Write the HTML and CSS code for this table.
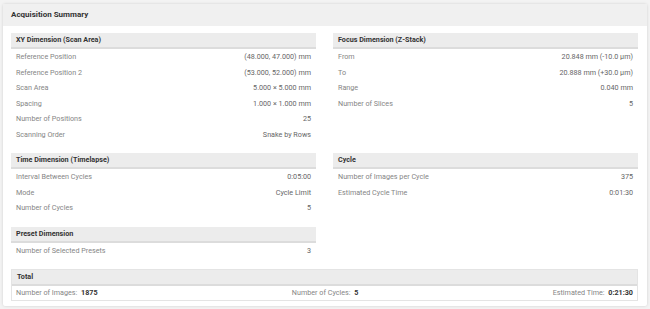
FILE: index.html
```html
<!DOCTYPE html>
<html lang="en">
<head>
    <meta charset="UTF-8">
    <title>Acquisition Summary</title>
    <link rel="stylesheet" href="styles.css">
</head>
<body>

<div class="card">
    <div class="card-header">Acquisition Summary</div>

    <div class="card-body">
        <div class="grid">
            <div class="section">
                <div class="section-title">XY Dimension (Scan Area)</div>
                <div class="row"><span>Reference Position</span><span class="value">(48.000, 47.000) mm</span></div>
                <div class="row"><span>Reference Position 2</span><span class="value">(53.000, 52.000) mm</span></div>
                <div class="row"><span>Scan Area</span><span class="value">5.000 × 5.000 mm</span></div>
                <div class="row"><span>Spacing</span><span class="value">1.000 × 1.000 mm</span></div>
                <div class="row"><span>Number of Positions</span><span class="value">25</span></div>
                <div class="row"><span>Scanning Order</span><span class="value">Snake by Rows</span></div>
            </div>

            <div class="section">
                <div class="section-title">Focus Dimension (Z-Stack)</div>
                <div class="row"><span>From</span><span class="value">20.848 mm (-10.0 µm)</span></div>
                <div class="row"><span>To</span><span class="value">20.888 mm (+30.0 µm)</span></div>
                <div class="row"><span>Range</span><span class="value">0.040 mm</span></div>
                <div class="row"><span>Number of Slices</span><span class="value">5</span></div>
            </div>

            <div class="section">
                <div class="section-title">Time Dimension (Timelapse)</div>
                <div class="row"><span>Interval Between Cycles</span><span class="value">0:05:00</span></div>
                <div class="row"><span>Mode</span><span class="value">Cycle Limit</span></div>
                <div class="row"><span>Number of Cycles</span><span class="value">5</span></div>
            </div>

            <div class="section">
                <div class="section-title">Cycle</div>
                <div class="row"><span>Number of Images per Cycle</span><span class="value">375</span></div>
                <div class="row"><span>Estimated Cycle Time</span><span class="value">0:01:30</span></div>
            </div>

            <div class="section">
                <div class="section-title">Preset Dimension</div>
                <div class="row"><span>Number of Selected Presets</span><span class="value">3</span></div>
            </div>
        </div>

        <!-- Totals -->
        <div class="total">
            <div class="section-title">Total</div>
            <div class="total-row">
                <span>Number of Images: <b>1875</b></span>
                <span>Number of Cycles: <b>5</b></span>
                <span>Estimated Time: <b>0:21:30</b></span>
            </div>
        </div>
    </div>
</div>

</body>
</html>
```

FILE: styles.css
```css
body {
    margin: 0;
    padding: 4px 3px 6px 3px;
    background: #f3f3f3;
    font-family: Roboto, sans-serif;
    font-size: 7.2px;
    color: #858585;
}

.card {
    background: #fff;
    border-radius: 2px;
    box-shadow: 0 0 3px rgba(0, 0, 0, 0.15);
}

.card-header {
    background: #f0f0f0;
    height: 22px;
    line-height: 22px;
    padding: 0 8px;
    font-size: 8px;
    font-weight: 700;
    color: #333;
}

.card-body {
    padding: 7px 9px 5px 8px;
}

.grid {
    display: grid;
    grid-template-columns: 1fr 1fr;
    column-gap: 17px;
    row-gap: 11px;
}

.section-title {
    background: #ececec;
    border-bottom: 2px solid #dcdcdc;
    height: 14px;
    line-height: 14px;
    padding: 0 5px;
    font-weight: 700;
    color: #333;
}

.row {
    display: flex;
    justify-content: space-between;
    height: 15.5px;
    line-height: 15.5px;
    padding: 0 5px;
}

.value {
    color: #666;
}

.total {
    margin-top: 11px;
    border: 1px solid #e4e4e4;
}

.total-row {
    display: flex;
    justify-content: space-between;
    height: 14px;
    line-height: 14px;
    padding: 0 4px;
}

.total-row b {
    color: #333;
    margin-left: 2px;
}
```
